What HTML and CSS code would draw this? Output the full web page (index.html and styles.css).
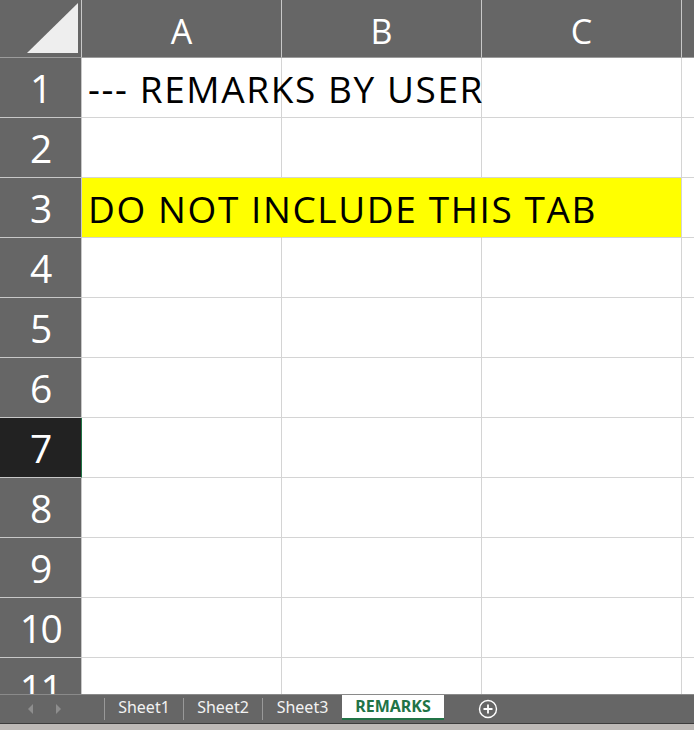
FILE: index.html
```html
<!DOCTYPE html>
<html lang="en">

<head>
  <meta charset="UTF-8">
  <title>REMARKS</title>
  <link rel="stylesheet" href="styles.css">
</head>

<body>
  <div class="sheet">
    <div class="grid">
      <div class="corner"><div class="corner-tri"></div></div>
      <div class="col-head">A</div>
      <div class="col-head">B</div>
      <div class="col-head">C</div>
      <div class="col-head last"></div>

      <div class="row-head">1</div>
      <div class="cell overflow">--- REMARKS BY USER</div>
      <div class="cell"></div>
      <div class="cell"></div>
      <div class="cell last"></div>

      <div class="row-head">2</div>
      <div class="cell"></div>
      <div class="cell"></div>
      <div class="cell"></div>
      <div class="cell last"></div>

      <div class="row-head">3</div>
      <div class="cell yellow overflow">DO NOT INCLUDE THIS TAB</div>
      <div class="cell yellow"></div>
      <div class="cell yellow"></div>
      <div class="cell last"></div>

      <div class="row-head">4</div>
      <div class="cell"></div>
      <div class="cell"></div>
      <div class="cell"></div>
      <div class="cell last"></div>

      <div class="row-head">5</div>
      <div class="cell"></div>
      <div class="cell"></div>
      <div class="cell"></div>
      <div class="cell last"></div>

      <div class="row-head">6</div>
      <div class="cell"></div>
      <div class="cell"></div>
      <div class="cell"></div>
      <div class="cell last"></div>

      <div class="row-head active">7</div>
      <div class="cell selected"></div>
      <div class="cell"></div>
      <div class="cell"></div>
      <div class="cell last"></div>

      <div class="row-head">8</div>
      <div class="cell"></div>
      <div class="cell"></div>
      <div class="cell"></div>
      <div class="cell last"></div>

      <div class="row-head">9</div>
      <div class="cell"></div>
      <div class="cell"></div>
      <div class="cell"></div>
      <div class="cell last"></div>

      <div class="row-head">10</div>
      <div class="cell"></div>
      <div class="cell"></div>
      <div class="cell"></div>
      <div class="cell last"></div>

      <div class="row-head">11</div>
      <div class="cell"></div>
      <div class="cell"></div>
      <div class="cell"></div>
      <div class="cell last"></div>
    </div>
  </div>

  <div class="tabbar">
    <div class="nav">
      <span class="arrow left"></span>
      <span class="arrow right"></span>
    </div>
    <div class="tab">Sheet1</div>
    <div class="tab">Sheet2</div>
    <div class="tab">Sheet3</div>
    <div class="tab current">REMARKS</div>
    <div class="add">
      <svg width="20" height="20" viewBox="0 0 20 20">
        <circle cx="10" cy="10" r="8.5" fill="none" stroke="#fff" stroke-width="1.4" />
        <path d="M10 5.5v9M5.5 10h9" stroke="#fff" stroke-width="1.8" />
      </svg>
    </div>
  </div>
  <div class="statusbar"></div>
</body>

</html>
```

FILE: styles.css
```css
body {
  margin: 0;
  width: 694px;
  height: 730px;
  overflow: hidden;
  background-color: #fff;
  font-family: "Open Sans", sans-serif;
}

.sheet {
  height: 694px;
  overflow: hidden;
}

.grid {
  display: grid;
  grid-template-columns: 82px 200px 200px 200px 100px;
  grid-template-rows: 58px repeat(11, 60px);
}

.corner {
  background-color: #666;
  border-right: 1px solid #c8c8c8;
  border-bottom: 1px solid #9c9c9c;
  position: relative;
}

.corner-tri {
  position: absolute;
  right: 3px;
  bottom: 4px;
  width: 0;
  height: 0;
  border-left: 51px solid transparent;
  border-bottom: 50px solid #eeeeee;
}

.col-head {
  background-color: #666;
  color: #fff;
  border-right: 1px solid #c8c8c8;
  border-bottom: 1px solid #9c9c9c;
  font-size: 34px;
  line-height: 63px;
  height: 57px;
  overflow: hidden;
  text-align: center;
}

.row-head {
  background-color: #666;
  color: #fff;
  border-right: 1px solid #c8c8c8;
  border-bottom: 1px solid #c8c8c8;
  font-size: 39px;
  letter-spacing: -1.5px;
  line-height: 60px;
  text-align: center;
}

.row-head.active {
  background-color: #222;
  border-right-color: #217346;
}

.cell {
  border-right: 1px solid #d4d4d4;
  border-bottom: 1px solid #d4d4d4;
  font-size: 37px;
  letter-spacing: 1.6px;
  line-height: 62px;
  padding-left: 6px;
  white-space: nowrap;
  color: #000;
}

.cell.overflow {
  overflow: visible;
  position: relative;
  z-index: 1;
}

.cell.yellow {
  background-color: #ffff00;
  border-right-color: #ffff00;
}

.cell.yellow + .cell.yellow + .cell.yellow {
  border-right-color: #d4d4d4;
}

.tabbar {
  height: 28px;
  background-color: #666;
  border-top: 1px solid #8a8a8a;
  border-bottom: 1px solid #3c3c3c;
  display: flex;
  align-items: flex-start;
  font-family: "Segoe UI", "Noto Sans", sans-serif;
  font-size: 16px;
}

.nav {
  width: 105px;
  height: 22px;
  margin-top: 3px;
  border-right: 1px solid #999;
  display: flex;
  align-items: center;
  justify-content: flex-start;
  gap: 23px;
  padding-left: 28px;
  box-sizing: border-box;
}

.arrow {
  width: 0;
  height: 0;
  border-top: 5px solid transparent;
  border-bottom: 5px solid transparent;
}

.arrow.left {
  border-right: 5px solid #8e8e8e;
}

.arrow.right {
  border-left: 5px solid #8e8e8e;
}

.tab {
  color: #f2f2f2;
  width: 79px;
  box-sizing: border-box;
  text-align: center;
  height: 22px;
  margin-top: 3px;
  line-height: 19px;
  border-right: 1px solid #999;
}

.tab:nth-child(4) {
  border-right: none;
}

.tab.current {
  width: 102px;
  background-color: #fff;
  color: #217346;
  font-weight: bold;
  margin-top: 0;
  height: 25px;
  line-height: 23px;
  border-right: none;
  border-bottom: 2px solid #217346;
}

.add {
  margin-left: 34px;
  margin-top: 4px;
}

.statusbar {
  height: 7px;
  background-color: #bdb9b6;
}
```
